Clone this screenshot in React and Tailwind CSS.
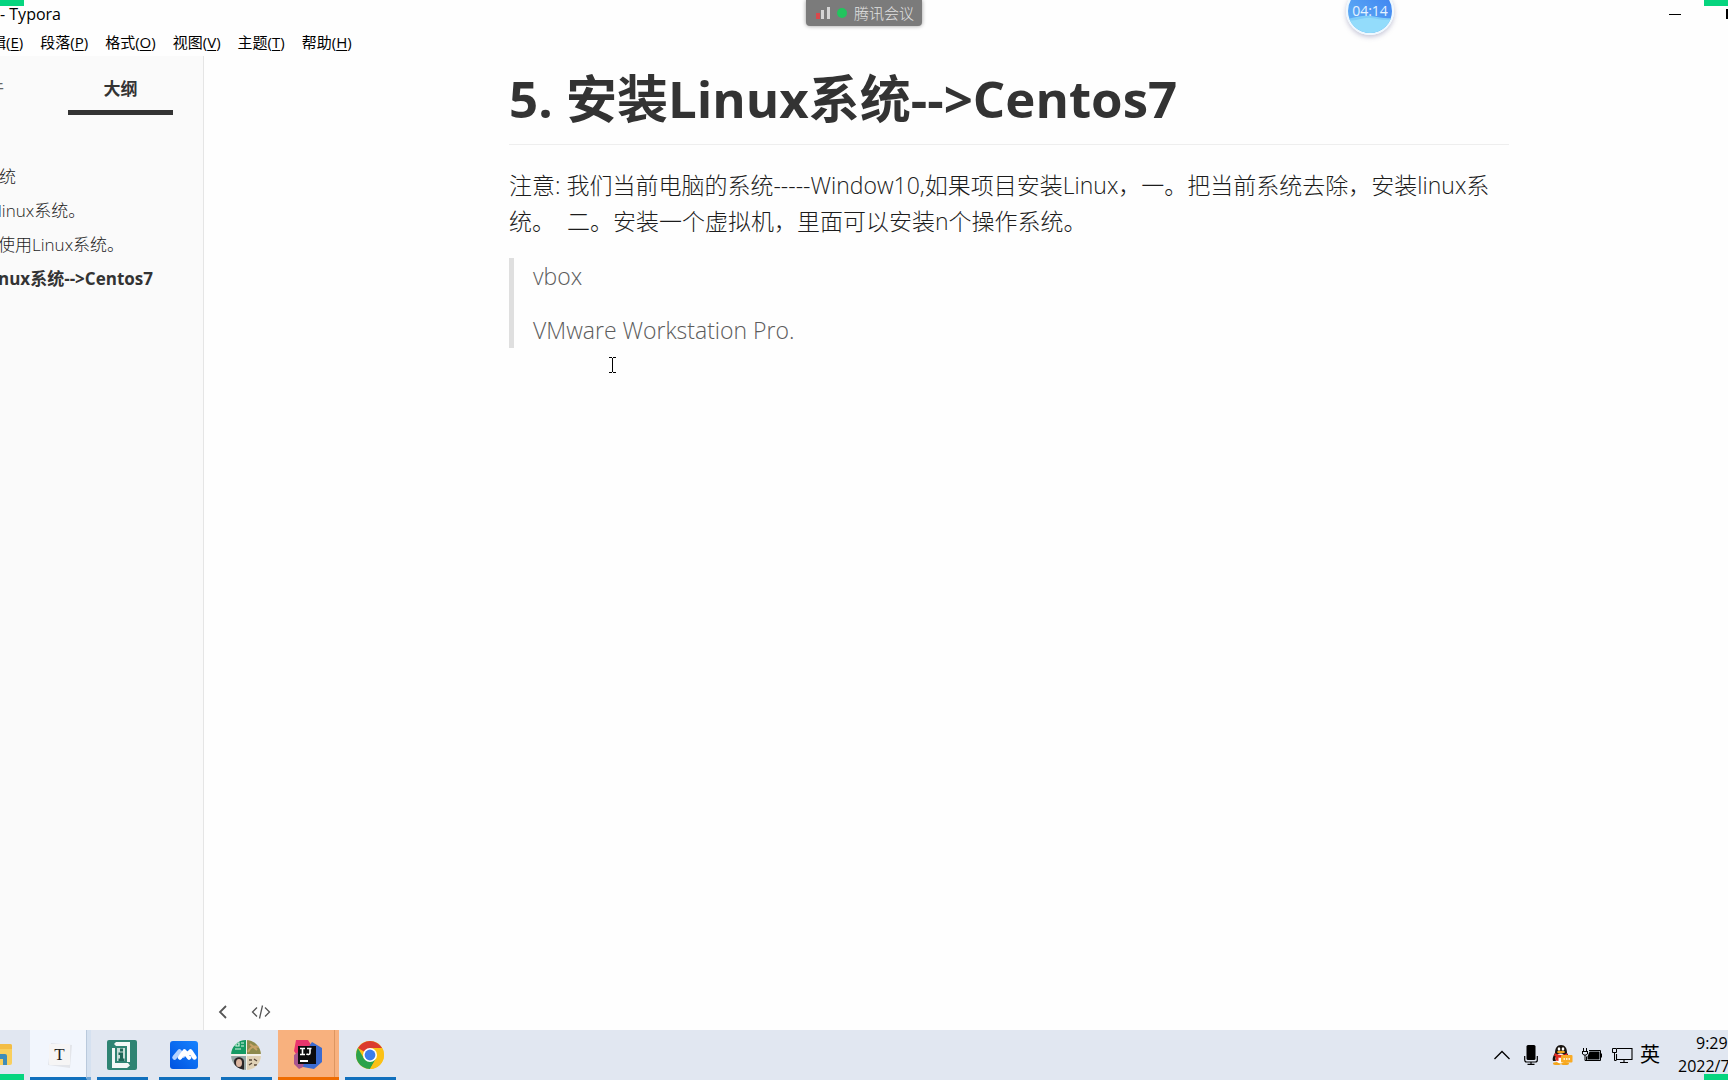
import React from 'react';

const menus = [
  {name: '辑', letter: 'E'},
  {name: '段落', letter: 'P'},
  {name: '格式', letter: 'O'},
  {name: '视图', letter: 'V'},
  {name: '主题', letter: 'T'},
  {name: '帮助', letter: 'H'},
];

function TitleBar() {
  return (
    <header className="shrink-0 text-black">
      <div className="flex h-7 items-center justify-between overflow-hidden">
        <span className="text-base leading-7 whitespace-nowrap">- Typora</span>
        <div className="flex h-full">
          <button aria-label="最小化" className="flex h-full w-[53px] items-center">
            <span className="h-px w-3 bg-black" />
          </button>
          <button aria-label="最大化" className="-mr-[6px] flex h-full w-3 items-center pl-1">
            <span className="h-[10px] w-[10px] border-2 border-black" />
          </button>
        </div>
      </div>
      <nav className="-ml-[9px] flex h-7 items-center gap-[17px] overflow-hidden">
        {menus.map(m => (
          <button key={m.letter} className="text-[15px] leading-7 whitespace-nowrap">
            {m.name}(<u className="underline-offset-2">{m.letter}</u>)
          </button>
        ))}
      </nav>
    </header>
  );
}

function Sidebar() {
  return (
    <aside className="w-[204px] shrink-0 overflow-hidden border-r border-[#e5e5e5] bg-[#fafafa] text-[#333]">
      <div className="flex h-[59px] items-stretch">
        <button className="-ml-[13px] w-[81px] pt-1 text-left text-[17px] text-[#666]">件</button>
        <button className="w-[105px] border-b-[5px] border-[#333] pt-3 text-[17px] font-bold">
          大纲
        </button>
      </div>
      <ul className="mt-[45px] -ml-[2px] text-[17px] leading-[34px] font-light whitespace-nowrap text-[#1c1c1c]">
        <li>
          <a href="#os" className="-ml-4">系统</a>
        </li>
        <li>
          <a href="#linux">linux系统。</a>
        </li>
        <li>
          <a href="#use">使用Linux系统。</a>
        </li>
        <li>
          <a href="#centos" className="font-bold text-[#333]">nux系统--&gt;Centos7</a>
        </li>
      </ul>
    </aside>
  );
}

function Editor() {
  return (
    <main className="flex min-w-0 flex-1 flex-col">
      <article className="ml-[305px] w-full max-w-[1000px] flex-1 text-[23px] leading-9 font-light text-[#1c1c1c]">
        <h1
          id="centos"
          className="mt-2 border-b border-[#eee] pb-3 text-[51px] leading-[68px] font-bold text-[#333]"
        >
          5. 安装Linux系统--&gt;Centos7
        </h1>
        <p className="mt-[22px]">
          注意: 我们当前电脑的系统-----Window10,如果项目安装Linux，一。把当前系统去除，安装linux系统。{'\u00a0'} 二。安装一个虚拟机，里面可以安装n个操作系统。
        </p>
        <blockquote className="mt-[19px] border-l-[5px] border-[#dfdfdf] pl-[19px] text-[#5c5c5c]">
          <p>vbox</p>
          <p className="mt-[18px]">VMware Workstation Pro.</p>
        </blockquote>
      </article>
      <footer className="flex h-9 items-center gap-[21px] pl-3 text-[#555]">
        <button aria-label="侧边栏">
          <svg width="14" height="14" viewBox="0 0 14 14" fill="none" stroke="currentColor" strokeWidth="1.800">
            <path d="M10 1 4 7l6 6" />
          </svg>
        </button>
        <button aria-label="源代码模式">
          <svg width="20" height="14" viewBox="0 0 20 14" fill="none" stroke="currentColor" strokeWidth="1.300">
            <path d="M6 2.500 1.500 7 6 11.500M14 2.500 18.500 7 14 11.500M11.500.5l-3 13" />
          </svg>
        </button>
      </footer>
    </main>
  );
}

function FolderIcon() {
  return (
    <svg width="12" height="24" viewBox="0 0 12 24">
      <path d="M0 1h10a2 2 0 0 1 2 2v17a2 2 0 0 1-2 2H0z" fill="#f9cf5d" />
      <path d="M0 1h10a2 2 0 0 1 2 2v3H0z" fill="#f3bd45" />
      <path d="M0 11h5a2 2 0 0 1 2 2v9H3v-6H0z" fill="#3f8cb8" />
    </svg>
  );
}

function TyporaIcon() {
  return (
    <svg width="28" height="28" viewBox="0 0 28 28">
      <path d="M5 2 26 4l-2 23L2 24z" fill="#e3e5ea" />
      <rect x="3" y="3" width="21" height="21" rx="1" fill="#f6f5f5" />
      <text x="13.500" y="19" textAnchor="middle" fontSize="17" fontFamily="Liberation Serif, serif" fill="#222">
        T
      </text>
    </svg>
  );
}

function BookIcon() {
  return (
    <svg width="30" height="30" viewBox="0 0 30 30">
      <rect width="30" height="30" rx="2" fill="#2f8473" />
      <path d="M7 4 9 2h14v20h-3V6H9z" fill="#f3f8f6" />
      <path d="M5 8h3v15h13l2 2.500-3 2.500H5z" fill="#f3f8f6" />
      <path d="M10 8h8v13h-8z" fill="#c9dfd8" />
      <path d="M13 8.500h3v3h-3zM11.500 12.500H16v6h1.500V21h-6v-2.500H13V15h-1.500z" fill="#1f6657" />
    </svg>
  );
}

function MeetingIcon() {
  return (
    <svg width="28" height="28" viewBox="0 0 28 28">
      <defs>
        <linearGradient id="blue" x1="0" y1="1" x2="1" y2="0">
          <stop offset="0" stopColor="#0052e0" />
          <stop offset="1" stopColor="#1683ff" />
        </linearGradient>
      </defs>
      <rect width="28" height="28" rx="3" fill="url(#blue)" />
      <path d="M4.500 16.500 9.500 10.500l4 4" fill="none" stroke="#b5d3ff" strokeWidth="4.500" strokeLinecap="round" strokeLinejoin="round" />
      <path d="m10 16.500 4.500-6 4.500 6M17 14l3.500-3.500 4 6" fill="none" stroke="#fff" strokeWidth="4.500" strokeLinecap="round" strokeLinejoin="round" />
    </svg>
  );
}

function PhotosIcon() {
  return (
    <svg width="30" height="30" viewBox="0 0 30 30">
      <defs>
        <clipPath id="round">
          <circle cx="15" cy="15" r="15" />
        </clipPath>
      </defs>
      <g clipPath="url(#round)">
        <rect width="30" height="30" fill="#f3f0e8" />
        <rect width="15" height="14" fill="#159a63" />
        <path d="M3 6V2M5 6h3V3H5zM10 6h3M10 3h3M4 9h6" stroke="#d9f3e4" strokeWidth="1.200" fill="none" />
        <rect x="16" width="14" height="14" fill="#8d8a4c" />
        <path d="M17 12c3-6 6-6 12-5M19 4l7 6" stroke="#c7a266" strokeWidth="2" fill="none" />
        <rect y="16" width="15" height="14" fill="#94a5a4" />
        <path d="M3 21c1-5 9-5 10 0v9H4z" fill="#2b2526" />
        <ellipse cx="8" cy="23" rx="3" ry="4" fill="#dcb6a0" />
        <rect x="16" y="16" width="14" height="14" fill="#dfd1b5" />
        <path d="M18 20h3M23 19l3 2M18 25l3-2M23 25h3" stroke="#59493a" strokeWidth="1.400" />
      </g>
    </svg>
  );
}

function IdeaIcon() {
  return (
    <svg width="30" height="30" viewBox="0 0 30 30">
      <path d="M3 0h12l5 8-8 18-6 2-4-5 3-6-4-6z" fill="#e8356d" />
      <path d="M1 15 8 10l4 16-6 3-5-5z" fill="#a9568f" />
      <path d="M19 2 29 8v14l-8 7-11-2 5-19z" fill="#3b6bd0" />
      <rect x="5" y="6" width="18" height="18" fill="#0b0b0d" />
      <path d="M7 8.500h5M9.500 8.500v6M7 14.500h5M14 8.500h4.500M17 8.500v4.500c0 1.800-2.500 2-3.500.8" stroke="#fff" strokeWidth="1.600" fill="none" />
      <rect x="7" y="20" width="8" height="2" fill="#fff" />
    </svg>
  );
}

function ChromeIcon() {
  return (
    <svg width="28" height="28" viewBox="0 0 28 28">
      <circle cx="14" cy="14" r="14" fill="#fbc116" />
      <path d="M14 14 1.900 7A14 14 0 0 1 26.100 7z" fill="#db3a2e" />
      <path d="M1.900 7A14 14 0 0 0 14 28l6-10.500L14 14 8 17.500z" fill="#2ba24c" />
      <path d="M14 7h12.100A14 14 0 0 1 14 28l6.100-10.500z" fill="#fbc116" />
      <circle cx="14" cy="14" r="7" fill="#fff" />
      <circle cx="14" cy="14" r="5.400" fill="#3b7ded" />
    </svg>
  );
}

function Tray() {
  return (
    <div className="flex shrink-0 items-center text-black">
      <button aria-label="显示隐藏的图标" className="w-[30px]">
        <svg width="16" height="10" viewBox="0 0 16 10" fill="none" stroke="currentColor" strokeWidth="1.300">
          <path d="M.5 9 8 1.500 15.500 9" />
        </svg>
      </button>
      <button aria-label="麦克风" className="w-7">
        <svg width="14" height="20" viewBox="0 0 14 20">
          <rect x="2.500" y="0" width="9" height="15" rx="1.500" />
          <path d="M.7 11v4c0 1.500 1 2 2 2h8.600c1 0 2-.5 2-2v-4M7 17v2.500M3.500 19.400h7" fill="none" stroke="#000" strokeWidth="1.200" />
        </svg>
      </button>
      <button aria-label="QQ" className="w-[30px]">
        <svg width="21" height="20" viewBox="0 0 21 20">
          <ellipse cx="5" cy="18.500" rx="4" ry="1.500" fill="#f3a51b" />
          <ellipse cx="13" cy="18.500" rx="4" ry="1.500" fill="#f3a51b" />
          <path d="M3 8C3 3 5 0 9 0s6 3 6 8c2 3 3 6 2 8H1c-1-2 0-5 2-8z" fill="#17130f" />
          <ellipse cx="8.500" cy="13.500" rx="5" ry="5" fill="#fff" />
          <path d="M3 8c3 2.500 9 2.500 12 0l.5 2.500c-3 2-7 2.500-9 2V16l-3-.5.300-4L2 10.500z" fill="#e02b20" />
          <ellipse cx="7" cy="4" rx="1.300" ry="1.800" fill="#fff" />
          <ellipse cx="11" cy="4" rx="1.300" ry="1.800" fill="#fff" />
          <ellipse cx="9" cy="7" rx="4" ry="1.200" fill="#f3a51b" />
          <path d="M10 10h9.500a1 1 0 0 1 1 1v5.500a1 1 0 0 1-1 1H14L11.500 19v-1.500H10a1 1 0 0 1-1-1V11a1 1 0 0 1 1-1z" fill="#f9ab25" />
          <path d="M11.500 14h1.500M14 14h1.500M16.500 14H18" stroke="#fff" strokeWidth="1.400" />
        </svg>
      </button>
      <button aria-label="电源" className="w-[30px]">
        <svg width="20" height="14" viewBox="0 0 20 14">
          <path d="M1.500 0v3M4.500 0v3M0 3.500h6M.5 3.500V6L2 7h2l1.500-1V3.500M3 7v5.500h2" fill="none" stroke="#000" />
          <path d="M7 2.500h11.500v10H4.500V8.500M19.500 5.500v4" fill="none" stroke="#000" />
          <path d="M7.500 3.500H17.500v8H5.500V8.500z" />
        </svg>
      </button>
      <button aria-label="网络" className="w-7">
        <svg width="21" height="17" viewBox="0 0 21 17" fill="none" stroke="currentColor">
          <path d="M5 1.500h15v11H4.500V7M12 12.500v3M8 15.500h8" strokeWidth="1.100" />
          <path d="M.5 1.500h4v4h-4zM2.500 5.500v8h2" />
        </svg>
      </button>
      <button className="text-xl">英</button>
      <div className="ml-[18px] w-[50px] text-base leading-[23px] whitespace-nowrap">
        <div className="pl-[18px]">9:29</div>
        <div>2022/7</div>
      </div>
    </div>
  );
}

function TaskButton({label, children}) {
  return (
    <button
      aria-label={label}
      className="flex h-full w-[51px] items-center justify-center border-b-[3px] border-[#1170bd] pt-[3px] pr-[2px]"
    >
      {children}
    </button>
  );
}

function Taskbar() {
  return (
    <div className="flex h-[50px] shrink-0 justify-between overflow-hidden bg-[#e1e7f1]">
      <div className="flex">
        <button aria-label="文件资源管理器" className="flex w-[30px] items-center">
          <FolderIcon />
        </button>
        <button
          aria-label="Typora"
          className="flex w-[57px] items-center justify-center border-r border-b-[3px] border-r-[#b9c9dc] border-b-[#1170bd] bg-[#f2f6fd] pt-[3px] pl-1"
        >
          <TyporaIcon />
        </button>
        <div className="mr-[6px] w-1 border-b-[3px] border-[#6ba3d6] bg-[#d5e1f0]" />
        <div className="flex gap-[11px]">
          <TaskButton label="词典"><BookIcon /></TaskButton>
          <TaskButton label="腾讯会议"><MeetingIcon /></TaskButton>
          <TaskButton label="相册"><PhotosIcon /></TaskButton>
        </div>
        <button
          aria-label="IntelliJ IDEA"
          className="mr-[6px] ml-[6px] flex w-[61px] border-b-[3px] border-[#ef6c00] bg-[#f8b17e]"
        >
          <span className="flex h-full w-[57px] items-center justify-center border-r border-[#dd9661] pt-[3px] pl-1">
            <IdeaIcon />
          </span>
        </button>
        <TaskButton label="Chrome"><ChromeIcon /></TaskButton>
      </div>
      <Tray />
    </div>
  );
}

function MeetingPill() {
  return (
    <div className="absolute top-0 left-1/2 flex h-[26px] w-[116px] -translate-x-1/2 items-center gap-[7px] rounded-b bg-[#7b7b7b] pl-[10px] text-[15px] font-light whitespace-nowrap text-[#e2e2e2] shadow-[0_0_4px_rgba(0,0,0,0.4)]">
      <svg width="14" height="12" viewBox="0 0 14 12">
        <rect x="0" y="6" width="4" height="6" fill="#d9484c" />
        <rect x="5" y="3" width="3" height="9" fill="#d5d5d5" />
        <rect x="11" y="0" width="3" height="12" fill="#d5d5d5" />
      </svg>
      <span className="h-[10px] w-[10px] rounded-full bg-[#22c55e]" />
      <span>腾讯会议</span>
    </div>
  );
}

function Timer() {
  return (
    <div className="absolute -top-[13px] right-[334px] flex h-12 w-12 items-center justify-center overflow-hidden rounded-full border-2 border-[#eef8ff] bg-gradient-to-bl from-[#3d7ff0] to-[#66b4f5] shadow-[0_2px_5px_rgba(90,90,140,0.35)]">
      <svg className="absolute inset-0" width="44" height="44" viewBox="0 0 44 44">
        <path d="M0 30c8-2 15-4 23-3s14 3 21 2v15H0z" fill="#7fcdf8" />
        <path d="M0 31c8 2 15-3 23-2s14 3 21 1v14H0z" fill="#93dcfb" />
      </svg>
      <span className="relative text-sm text-[#e6f3ff]">04:14</span>
    </div>
  );
}

export default function App() {
  return (
    <div className="relative flex h-screen flex-col overflow-hidden bg-[#fefefe] font-['Open_Sans','Noto_Sans_CJK_SC',sans-serif]">
      <TitleBar />
      <div className="flex min-h-0 flex-1">
        <Sidebar />
        <Editor />
      </div>
      <Taskbar />

      <MeetingPill />
      <Timer />

      {/* text cursor */}
      <svg className="absolute top-[357px] left-[609px]" width="7" height="16" viewBox="0 0 7 16">
        <path d="M0 .5h3M4 .5h3M3.500 1v14M0 15.500h3M4 15.500h3" stroke="#000" fill="none" />
      </svg>

      {/* screen share corners */}
      <div className="absolute top-0 left-0 h-[6px] w-6 bg-[#06d57f]" />
      <div className="absolute top-0 right-0 h-[6px] w-6 bg-[#06d57f]" />
      <div className="absolute bottom-0 left-0 h-[6px] w-6 bg-[#06d57f]" />
      <div className="absolute right-0 bottom-0 h-[6px] w-6 bg-[#06d57f]" />
    </div>
  );
}
